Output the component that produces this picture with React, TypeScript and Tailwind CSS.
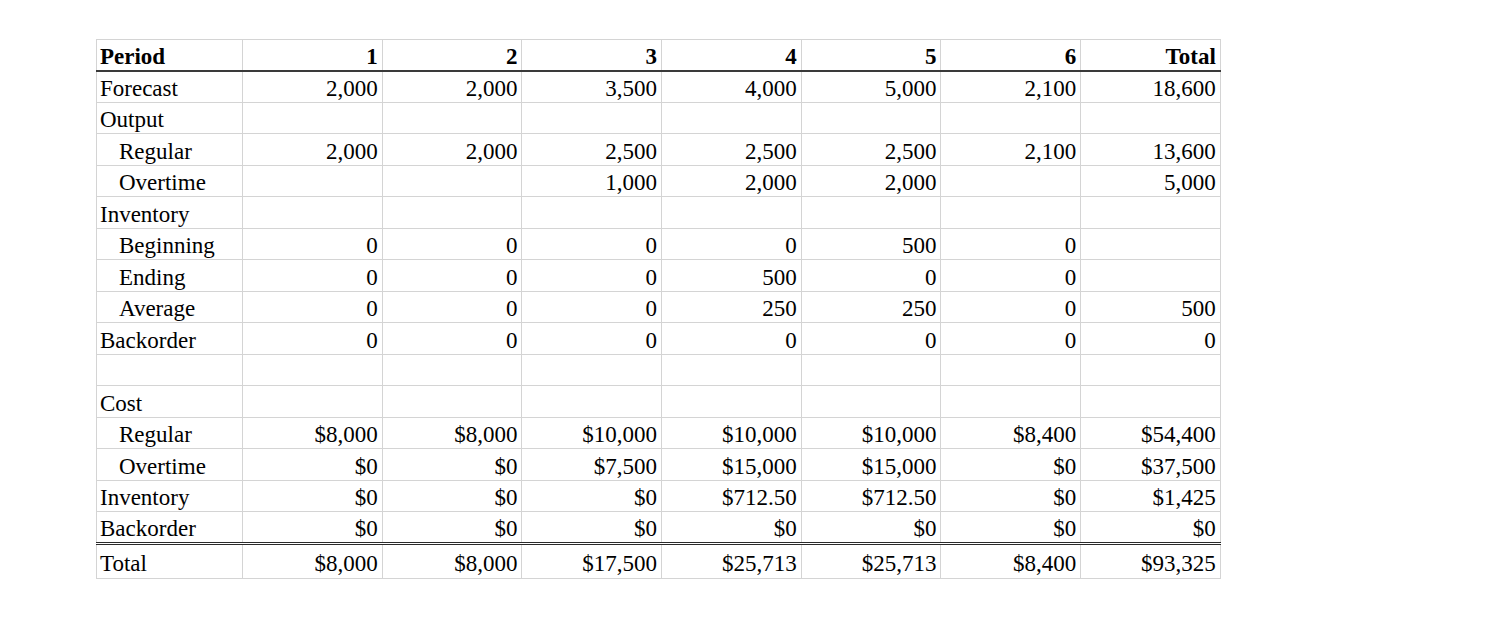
const COLS = ["1", "2", "3", "4", "5", "6", "Total"];

type Row = { label: string; indent?: boolean; values: string[] };

const ROWS: Row[] = [
  { label: "Forecast", values: ["2,000", "2,000", "3,500", "4,000", "5,000", "2,100", "18,600"] },
  { label: "Output", values: ["", "", "", "", "", "", ""] },
  { label: "Regular", indent: true, values: ["2,000", "2,000", "2,500", "2,500", "2,500", "2,100", "13,600"] },
  { label: "Overtime", indent: true, values: ["", "", "1,000", "2,000", "2,000", "", "5,000"] },
  { label: "Inventory", values: ["", "", "", "", "", "", ""] },
  { label: "Beginning", indent: true, values: ["0", "0", "0", "0", "500", "0", ""] },
  { label: "Ending", indent: true, values: ["0", "0", "0", "500", "0", "0", ""] },
  { label: "Average", indent: true, values: ["0", "0", "0", "250", "250", "0", "500"] },
  { label: "Backorder", values: ["0", "0", "0", "0", "0", "0", "0"] },
  { label: "", values: ["", "", "", "", "", "", ""] },
  { label: "Cost", values: ["", "", "", "", "", "", ""] },
  { label: "Regular", indent: true, values: ["$8,000", "$8,000", "$10,000", "$10,000", "$10,000", "$8,400", "$54,400"] },
  { label: "Overtime", indent: true, values: ["$0", "$0", "$7,500", "$15,000", "$15,000", "$0", "$37,500"] },
  { label: "Inventory", values: ["$0", "$0", "$0", "$712.50", "$712.50", "$0", "$1,425"] },
  { label: "Backorder", values: ["$0", "$0", "$0", "$0", "$0", "$0", "$0"] },
];

const TOTAL = ["$8,000", "$8,000", "$17,500", "$25,713", "$25,713", "$8,400", "$93,325"];

export default function App() {
  return (
    <div className="min-h-screen bg-white pt-[39px] pl-[96px] font-['Liberation_Serif','Times_New_Roman',serif]">
      <table className="table-fixed border-collapse text-[23px] leading-none text-black w-[1124px]">
        <colgroup>
          <col className="w-[146px]" />
          {COLS.map((c) => (
            <col key={c} className="w-[139.7px]" />
          ))}
        </colgroup>
        <thead>
          <tr className="h-[31px]">
            <th className="border border-[#d4d4d4] border-b-2 border-b-[#3a3a3a] px-[3px] pt-[4px] text-left font-bold">
              Period
            </th>
            {COLS.map((c) => (
              <th
                key={c}
                className="border border-[#d4d4d4] border-b-2 border-b-[#3a3a3a] px-[4px] pt-[4px] text-right font-bold"
              >
                {c}
              </th>
            ))}
          </tr>
        </thead>
        <tbody>
          {ROWS.map((row, i) => (
            <tr key={i} className="h-[31.5px]">
              <td className={`border border-[#d4d4d4] pt-[4px] pr-[3px] ${row.indent ? "pl-[22px]" : "pl-[3px]"}`}>
                {row.label}
              </td>
              {row.values.map((v, j) => (
                <td key={j} className="border border-[#d4d4d4] px-[4px] pt-[4px] text-right">
                  {v}
                </td>
              ))}
            </tr>
          ))}
          <tr className="h-[35px]">
            <td className="border border-[#d4d4d4] border-t-[3px] border-t-[#2a2a2a] border-double pl-[3px] pt-[4px]">
              Total
            </td>
            {TOTAL.map((v, j) => (
              <td
                key={j}
                className="border border-[#d4d4d4] border-t-[3px] border-t-[#2a2a2a] border-double px-[4px] pt-[4px] text-right"
              >
                {v}
              </td>
            ))}
          </tr>
        </tbody>
      </table>
    </div>
  );
}
